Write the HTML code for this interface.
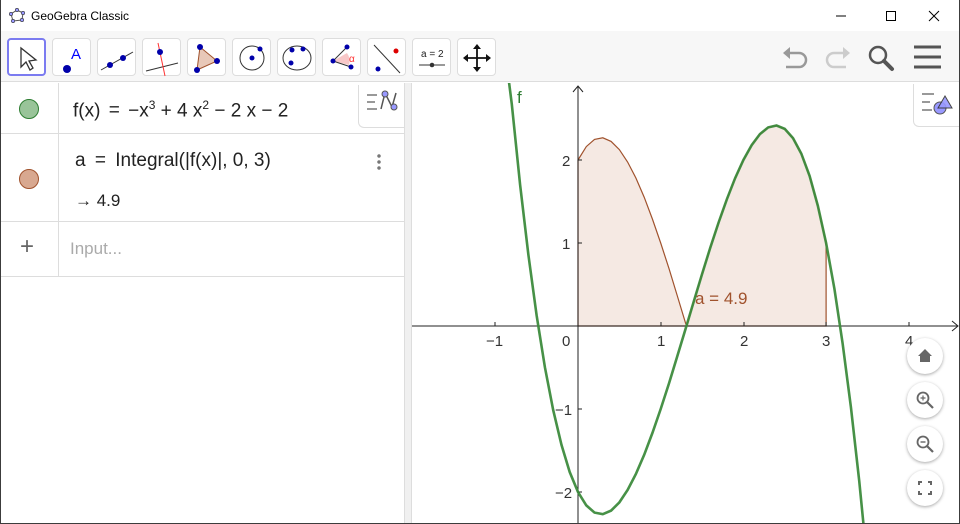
<!DOCTYPE html>
<html><head><meta charset="utf-8"><style>
*{margin:0;padding:0;box-sizing:border-box}
html,body{width:960px;height:524px;overflow:hidden}
body{background:#fff;font-family:"Liberation Sans",sans-serif;position:relative}
.win{position:absolute;left:0;top:0;width:960px;height:524px;border:1px solid #3c3c3c;border-top:none}
.title{position:absolute;left:0;top:0;width:960px;height:31px;background:#fff;font-size:12px}
.tb{position:absolute;left:1px;top:31px;width:958px;height:51px;background:#f7f7f7;border-bottom:1px solid #ddd}
.btn{position:absolute;top:7px;width:39px;height:38px;background:#fff;border:1px solid #ddd;border-radius:4px}
.av{position:absolute;left:1px;top:83px;width:403px;height:441px;background:#fff;overflow:hidden}
.row{position:absolute;left:0;width:403px;border-bottom:1px solid #ddd}
.mark{position:absolute;left:0;top:0;width:58px;height:100%;border-right:1px solid #ddd}
.math{position:absolute;left:72px;font-size:19px;color:#222;font-family:"Liberation Sans",sans-serif;white-space:nowrap}
.split{position:absolute;left:404px;top:83px;width:8px;height:441px;background:#f0f0f0;border-left:1px solid #ddd;border-right:1px solid #ddd}
.zb{position:absolute;left:907px;width:36px;height:36px;border-radius:50%;background:#fff;box-shadow:0 1px 3px rgba(0,0,0,.35)}
</style></head><body>
<div class="title">
<svg style="position:absolute;left:9px;top:8px" width="16" height="15"><polygon points="8,2 14,5 13,12 4,13 2,6" fill="none" stroke="#555" stroke-width="1"/><g fill="#99f" stroke="#333" stroke-width=".6"><circle cx="8" cy="2" r="1.7"/><circle cx="14" cy="5" r="1.7"/><circle cx="13" cy="12" r="1.7"/><circle cx="4" cy="13" r="1.7"/><circle cx="2" cy="6" r="1.7"/></g></svg>
<span style="position:absolute;left:31px;top:9px;color:#000">GeoGebra Classic</span>
<svg style="position:absolute;left:836px;top:8px" width="110" height="16"><line x1="0" y1="8" x2="10" y2="8" stroke="#000"/><rect x="50.5" y="3.5" width="9" height="9" fill="none" stroke="#000"/><path d="M93 3L103 13M103 3L93 13" stroke="#000"/></svg>
</div>
<div class="tb">
<div class="btn" style="left:6px;border:2px solid #7b7bf0"><svg width="36" height="36"><path d="M12 8L12 27L17 22L21 30L24 28L20 21L27 20Z" fill="#fff" stroke="#333" stroke-width="1.3"/></svg></div>
<div class="btn" style="left:51px"><svg width="38" height="38"><circle cx="14" cy="30" r="4" fill="#00a"/><text x="18" y="20" font-size="15" fill="#00f" font-family="Liberation Sans">A</text></svg></div>
<div class="btn" style="left:96px"><svg width="38" height="38"><line x1="3" y1="31" x2="35" y2="13" stroke="#333"/><circle cx="12" cy="26" r="3" fill="#00a"/><circle cx="25" cy="19" r="3" fill="#00a"/></svg></div>
<div class="btn" style="left:141px"><svg width="38" height="38"><line x1="3" y1="32" x2="35" y2="24" stroke="#333"/><line x1="15" y1="4" x2="22" y2="37" stroke="#f33"/><circle cx="17" cy="13" r="3" fill="#00a"/></svg></div>
<div class="btn" style="left:186px"><svg width="38" height="38"><polygon points="12,8 29,22 9,31" fill="#e8c8b8" stroke="#a0522d"/><g fill="#00a"><circle cx="12" cy="8" r="3"/><circle cx="29" cy="22" r="3"/><circle cx="9" cy="31" r="3"/></g></svg></div>
<div class="btn" style="left:231px"><svg width="38" height="38"><circle cx="19" cy="19" r="12" fill="none" stroke="#333"/><circle cx="19" cy="19" r="2.5" fill="#00a"/><circle cx="27" cy="10" r="2.5" fill="#00a"/></svg></div>
<div class="btn" style="left:276px"><svg width="38" height="38"><ellipse cx="19" cy="19" rx="14" ry="12" fill="none" stroke="#333"/><g fill="#00a"><circle cx="14" cy="11" r="2.5"/><circle cx="25" cy="10" r="2.5"/><circle cx="13" cy="24" r="2.5"/></g></svg></div>
<div class="btn" style="left:321px"><svg width="38" height="38"><path d="M10 22L24 14A14 14 0 0 1 26 26Z" fill="#f8c8c8"/><path d="M24 8L10 22L28 28" fill="none" stroke="#333"/><text x="26" y="23" font-size="10" fill="#f33">α</text><g fill="#00a"><circle cx="24" cy="8" r="2.5"/><circle cx="10" cy="22" r="2.5"/><circle cx="28" cy="28" r="2.5"/></g></svg></div>
<div class="btn" style="left:366px"><svg width="38" height="38"><line x1="6" y1="6" x2="32" y2="34" stroke="#333"/><circle cx="28" cy="12" r="2.5" fill="#d00"/><circle cx="10" cy="30" r="2.5" fill="#00a"/></svg></div>
<div class="btn" style="left:411px"><svg width="38" height="38"><text x="8" y="18" font-size="10" fill="#222" font-family="Liberation Sans">a = 2</text><line x1="6" y1="26" x2="32" y2="26" stroke="#333"/><circle cx="19" cy="26" r="2.3" fill="#333"/></svg></div>
<div class="btn" style="left:456px"><svg width="38" height="38"><path d="M19 7V31M7 19H31" stroke="#111" stroke-width="1.8"/><path d="M19 5L15 10H23ZM19 33L15 28H23ZM5 19L10 15V23ZM33 19L28 15V23Z" fill="#111"/></svg></div>
<svg style="position:absolute;left:780px;top:10px" width="170" height="34"><path d="M6 12H18A7 7 0 0 1 18 26H5" fill="none" stroke="#999" stroke-width="2.5"/><path d="M2 12L9 6V18Z" fill="#999"/><path d="M65 12H53A7 7 0 0 0 53 26H65" fill="none" stroke="#ccc" stroke-width="2.5"/><path d="M69 12L62 6V18Z" fill="#ccc"/><circle cx="97" cy="14" r="8" fill="none" stroke="#555" stroke-width="2.5"/><path d="M103 20L111 28" stroke="#555" stroke-width="4" stroke-linecap="round"/><path d="M133 6H160M133 16H160M133 26H160" stroke="#555" stroke-width="3"/></svg>
</div>
<div class="av">
<div class="row" style="top:0;height:51px"><div class="mark"><div style="position:absolute;left:18px;top:16px;width:20px;height:20px;border-radius:50%;background:#99c499;border:1px solid #2e7d32"></div></div>
<div class="math" style="top:15px">f(x) <span style="margin:0 3px">=</span> −x<sup style="font-size:12px">3</sup> + 4 x<sup style="font-size:12px">2</sup> − 2 x − 2</div></div>
<div class="row" style="top:51px;height:88px"><div class="mark"><div style="position:absolute;left:18px;top:35px;width:20px;height:20px;border-radius:50%;background:#d8a890;border:1px solid #a0522d"></div></div>
<div class="math" style="top:16px;left:74px">a <span style="margin:0 4px">=</span> Integral(|f(x)|, 0, 3)</div>
<div class="math" style="top:57px;left:74px;font-size:17px">→ 4.9</div>
<div style="position:absolute;left:376px;top:19px;width:4px;height:18px;background:radial-gradient(circle,#777 1.5px,transparent 2px) 0 0/4px 6px"></div></div>
<div class="row" style="top:139px;height:55px"><div class="mark"><span style="position:absolute;left:19px;top:11px;font-size:24px;color:#666;font-weight:300">+</span></div>
<div class="math" style="top:17px;left:69px;font-size:17px;color:#aaa">Input...</div></div>
<div style="position:absolute;left:357px;top:2px;width:47px;height:43px;background:#fff;border:1px solid #ddd;border-right:none;border-top:none;border-radius:0 0 0 6px"><svg width="46" height="40"><path d="M8 10H18M8 17H16M8 24H18" stroke="#999" stroke-width="2"/><path d="M22 24L26 8L33 22L37 8" fill="none" stroke="#555" stroke-width="1.5"/><circle cx="26" cy="9" r="3" fill="#99f" stroke="#555"/><circle cx="35" cy="22" r="3" fill="#99f" stroke="#555"/></svg></div>
</div>
<div class="split"></div>
<svg style="position:absolute;left:412px;top:83px" width="547" height="441" viewBox="412 83 547 441">
<path d="M578 160 L586.3 146.6 L594.5 139.4 L602.8 137.8 L611.1 141.4 L619.35 149.6 L627.6 162 L635.9 178 L644.2 197.2 L652.4 219 L660.7 243 L669 268.6 L677.2 295.5 L685.5 322.9 L686.7 326 L693.8 301.4 L702.05 274.1 L710.3 247.6 L718.6 222.5 L726.9 199.2 L735.1 178.2 L743.4 160 L751.7 145.1 L759.9 134.1 L768.2 127.4 L776.5 125.5 L784.75 128.9 L793 138.1 L801.3 153.6 L809.6 175.9 L817.8 205.6 L826.1 243 L826.1 326 L578 326Z" fill="#f5e9e3" stroke="#a0522d" stroke-width="1.2"/>
<line x1="412" y1="326" x2="958" y2="326" stroke="#222"/>
<line x1="578" y1="86" x2="578" y2="524" stroke="#222"/>
<path d="M573 92L578 86L583 92M952 321L958 326L952 331" fill="none" stroke="#222"/>
<g stroke="#222"><line x1="495" y1="322" x2="495" y2="326"/><line x1="661" y1="322" x2="661" y2="326"/><line x1="744" y1="322" x2="744" y2="326"/><line x1="826" y1="322" x2="826" y2="326"/><line x1="909" y1="322" x2="909" y2="326"/><line x1="578" y1="160" x2="582" y2="160"/><line x1="578" y1="243" x2="582" y2="243"/><line x1="578" y1="409" x2="582" y2="409"/><line x1="578" y1="492" x2="582" y2="492"/></g>
<g font-size="15" fill="#333" font-family="Liberation Sans"><text x="486" y="346">−1</text><text x="562" y="346">0</text><text x="657" y="346">1</text><text x="740" y="346">2</text><text x="822" y="346">3</text><text x="905" y="346">4</text><text x="562" y="166">2</text><text x="562" y="249">1</text><text x="555" y="415">−1</text><text x="555" y="498">−2</text></g>
<path d="M506.2 60 L511.8 104.2 L520.1 184.7 L528.4 254.9 L536.65 315.6 L544.9 367.2 L553.2 410.1 L561.5 444.9 L569.7 472 L578 492 L586.3 505.4 L594.5 512.6 L602.8 514.2 L611.1 510.6 L619.35 502.4 L627.6 490 L635.9 474 L644.2 454.8 L652.4 433 L660.7 409 L669 383.4 L677.2 356.5 L685.5 329.1 L693.8 301.4 L702.05 274.1 L710.3 247.6 L718.6 222.5 L726.9 199.2 L735.1 178.2 L743.4 160 L751.7 145.1 L759.9 134.1 L768.2 127.4 L776.5 125.5 L784.75 128.9 L793 138.1 L801.3 153.6 L809.6 175.9 L817.8 205.6 L826.1 243 L834.4 288.7 L842.6 343.3 L850.9 407.1 L859.2 480.7 L867.45 564.6" fill="none" stroke="#3d8b3d" stroke-width="2.6" opacity=".95"/>
<text x="517" y="103" font-size="17" fill="#2e7d32" font-family="Liberation Sans">f</text>
<text x="695" y="304" font-size="17" fill="#a0522d" font-family="Liberation Sans">a = 4.9</text>
</svg>
<div style="position:absolute;left:913px;top:84px;width:46px;height:43px;background:#fff;border:1px solid #ddd;border-right:none;border-top:none;border-radius:0 0 0 6px"><svg width="46" height="40"><path d="M8 10H20M8 18H16M8 26H18" stroke="#999" stroke-width="2"/><circle cx="26" cy="24" r="6" fill="#99f" stroke="#555"/><polygon points="31,12 38,24 24,24" fill="#99f" stroke="#333" opacity=".9"/></svg></div>
<div class="zb" style="top:338px"><svg width="36" height="36"><path d="M18 11L11 18H13V24H23V18H25Z" fill="#666"/></svg></div>
<div class="zb" style="top:382px"><svg width="36" height="36"><circle cx="16" cy="16" r="5.5" fill="none" stroke="#666" stroke-width="1.8"/><path d="M20 20L26 26" stroke="#666" stroke-width="2.2"/><path d="M13.5 16H18.5M16 13.5V18.5" stroke="#666" stroke-width="1.2"/></svg></div>
<div class="zb" style="top:426px"><svg width="36" height="36"><circle cx="16" cy="16" r="5.5" fill="none" stroke="#666" stroke-width="1.8"/><path d="M20 20L26 26" stroke="#666" stroke-width="2.2"/><path d="M13.5 16H18.5" stroke="#666" stroke-width="1.4"/></svg></div>
<div class="zb" style="top:470px"><svg width="36" height="36"><path d="M12 15V12H15M21 12H24V15M24 21V24H21M15 24H12V21" fill="none" stroke="#666" stroke-width="2"/></svg></div>
<div class="win"></div>
</body></html>
